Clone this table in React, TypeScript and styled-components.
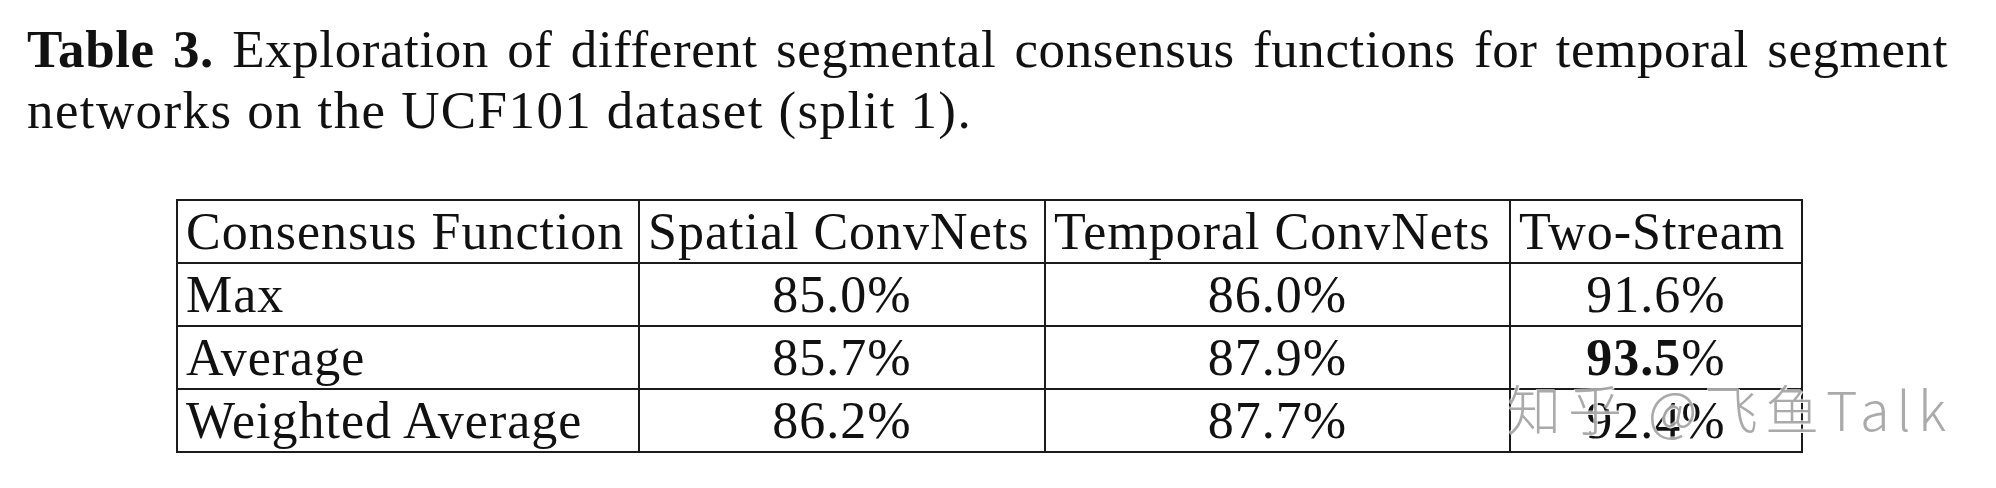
import React from "react";
import styled, { createGlobalStyle } from "styled-components";

const GlobalStyle = createGlobalStyle`
  html, body {
    margin: 0;
    padding: 0;
    background: #ffffff;
  }
  body {
    font-family: "Liberation Serif", "Times New Roman", serif;
    color: #111111;
  }
`;

const Page = styled.div`
  width: 1996px;
  height: 488px;
  padding: 19px 0 0 27px;
  box-sizing: border-box;
  overflow: hidden;
`;

const Caption = styled.div`
  width: 1921px;
  font-size: 53px;
  line-height: 61px;
  letter-spacing: 0.6px;
`;

// first line is stretched edge to edge like LaTeX justification, the last one is not
const CaptionLine = styled.div<{ $justify?: boolean }>`
  white-space: nowrap;
  text-align: ${(p) => (p.$justify ? "justify" : "left")};
  text-align-last: ${(p) => (p.$justify ? "justify" : "left")};
  letter-spacing: ${(p) => (p.$justify ? "0.6px" : "1.4px")};
`;

const Label = styled.b`
  font-weight: 700;
`;

const TableArea = styled.div`
  position: relative;
  margin: 58px 0 0 149px;
  width: 1625px;
`;

const Grid = styled.table`
  border-collapse: collapse;
  table-layout: fixed;
  width: 1625px;
  font-size: 52px;
  letter-spacing: 1px;
`;

const Row = styled.tr`
  height: 63px;
`;

const Cell = styled.td<{ $align?: "left" | "center" }>`
  border: 2px solid #1b1b1b;
  padding: 0 8px;
  text-align: ${(p) => p.$align ?? "center"};
  vertical-align: middle;
  white-space: nowrap;
  line-height: 58px;
  overflow: visible;
`;

const Best = styled.b`
  font-weight: 700;
`;

const Watermark = styled.div`
  position: absolute;
  left: 1331px;
  top: 177px;
  font-family: "Noto Sans CJK SC", "Noto Sans", sans-serif;
  font-weight: 300;
  font-size: 54px;
  line-height: 64px;
  letter-spacing: 7px;
  color: rgba(155, 155, 155, 0.85);
  text-shadow: 1px 1px 0 rgba(255, 255, 255, 0.9), -1px -1px 0 rgba(255, 255, 255, 0.6);
  white-space: nowrap;
  pointer-events: none;
`;

type Result = { name: string; spatial: string; temporal: string; twoStream: string; best?: boolean };

const results: Result[] = [
  { name: "Max", spatial: "85.0", temporal: "86.0", twoStream: "91.6" },
  { name: "Average", spatial: "85.7", temporal: "87.9", twoStream: "93.5", best: true },
  { name: "Weighted Average", spatial: "86.2", temporal: "87.7", twoStream: "92.4" },
];

const App = () => {
  return (
    <Page>
      <GlobalStyle />
      <Caption>
        <CaptionLine $justify>
          <Label>Table 3.</Label> Exploration of different segmental consensus functions for temporal segment
        </CaptionLine>
        <CaptionLine>networks on the UCF101 dataset (split 1).</CaptionLine>
      </Caption>
      <TableArea>
        <Grid>
          <colgroup>
            <col style={{ width: 462 }} />
            <col style={{ width: 406 }} />
            <col style={{ width: 465 }} />
            <col style={{ width: 292 }} />
          </colgroup>
          <tbody>
            <Row>
              <Cell $align="left">Consensus Function</Cell>
              <Cell $align="left">Spatial ConvNets</Cell>
              <Cell $align="left">Temporal ConvNets</Cell>
              <Cell $align="left">Two-Stream</Cell>
            </Row>
            {results.map((r) => (
              <Row key={r.name}>
                <Cell $align="left">{r.name}</Cell>
                <Cell>{r.spatial}%</Cell>
                <Cell>{r.temporal}%</Cell>
                <Cell>{r.best ? <Best>{r.twoStream}</Best> : r.twoStream}%</Cell>
              </Row>
            ))}
          </tbody>
        </Grid>
        <Watermark>知乎 @飞鱼Talk</Watermark>
      </TableArea>
    </Page>
  );
};

export default App;
